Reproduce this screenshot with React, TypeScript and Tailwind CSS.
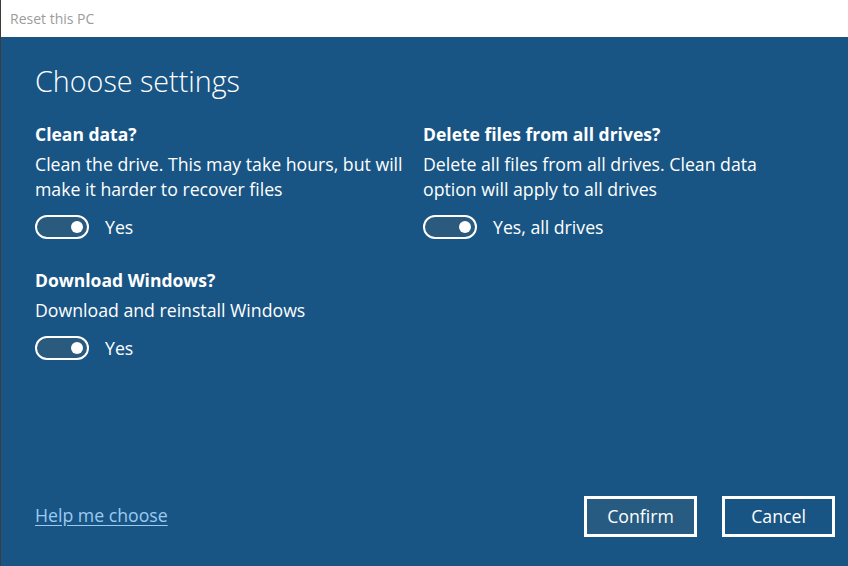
import React from "react";

// Toggle en position "On" : piste foncée, bord blanc, pastille à droite
function Toggle() {
  return (
    <div className="w-[54px] h-[24px] rounded-full border-2 border-white bg-[#2a5a7e] flex items-center justify-end pr-[4px] shrink-0">
      <div className="w-[12px] h-[12px] rounded-full bg-white" />
    </div>
  );
}

interface SettingProps {
  title: string;
  desc: string[];
  value: string;
}

function Setting({ title, desc, value }: SettingProps) {
  return (
    <div className="flex flex-col">
      <div className="text-[17.5px] font-bold leading-[22px] text-white">{title}</div>
      <div className="mt-[7px] text-[17.7px] leading-[25px] text-white">
        {desc.map((line) => (
          <div key={line}>{line}</div>
        ))}
      </div>
      <div className="mt-[13px] flex items-center gap-[16px]">
        <Toggle />
        <span className="text-[17.7px] leading-[24px] text-white">{value}</span>
      </div>
    </div>
  );
}

export default function App() {
  return (
    <div
      className="w-[848px] h-[566px] flex flex-col overflow-hidden border-l border-[#3c3c3c]"
      style={{ fontFamily: '"Open Sans", "Noto Sans", sans-serif' }}
    >
      {/* Barre de titre */}
      <div className="h-[37px] bg-white flex items-center pl-[9px] shrink-0">
        <span className="text-[14px] text-[#9c9c9c]">Reset this PC</span>
      </div>

      {/* Contenu */}
      <div className="flex-1 bg-[#195584] flex flex-col pl-[34px] pr-[13px] pt-[24px] pb-[29px]">
        <h1 className="text-[28.7px] font-light leading-[40px] text-white">Choose settings</h1>

        <div className="mt-[22px] grid grid-cols-[388px_1fr] gap-y-[30px]">
          <Setting
            title="Clean data?"
            desc={["Clean the drive. This may take hours, but will", "make it harder to recover files"]}
            value="Yes"
          />
          <Setting
            title="Delete files from all drives?"
            desc={["Delete all files from all drives. Clean data", "option will apply to all drives"]}
            value="Yes, all drives"
          />
          <Setting title="Download Windows?" desc={["Download and reinstall Windows"]} value="Yes" />
        </div>

        <div className="mt-auto flex items-end justify-between">
          <a className="text-[17.7px] text-[#9ccbf2] underline underline-offset-[3px] mb-[8px] cursor-pointer">
            Help me choose
          </a>
          <div className="flex gap-[25px]">
            <button className="w-[113px] h-[41px] border-[3px] border-white bg-[#285b81] text-[17.7px] text-white">
              Confirm
            </button>
            <button className="w-[113px] h-[41px] border-[3px] border-white text-[17.7px] text-white">
              Cancel
            </button>
          </div>
        </div>
      </div>
    </div>
  );
}
